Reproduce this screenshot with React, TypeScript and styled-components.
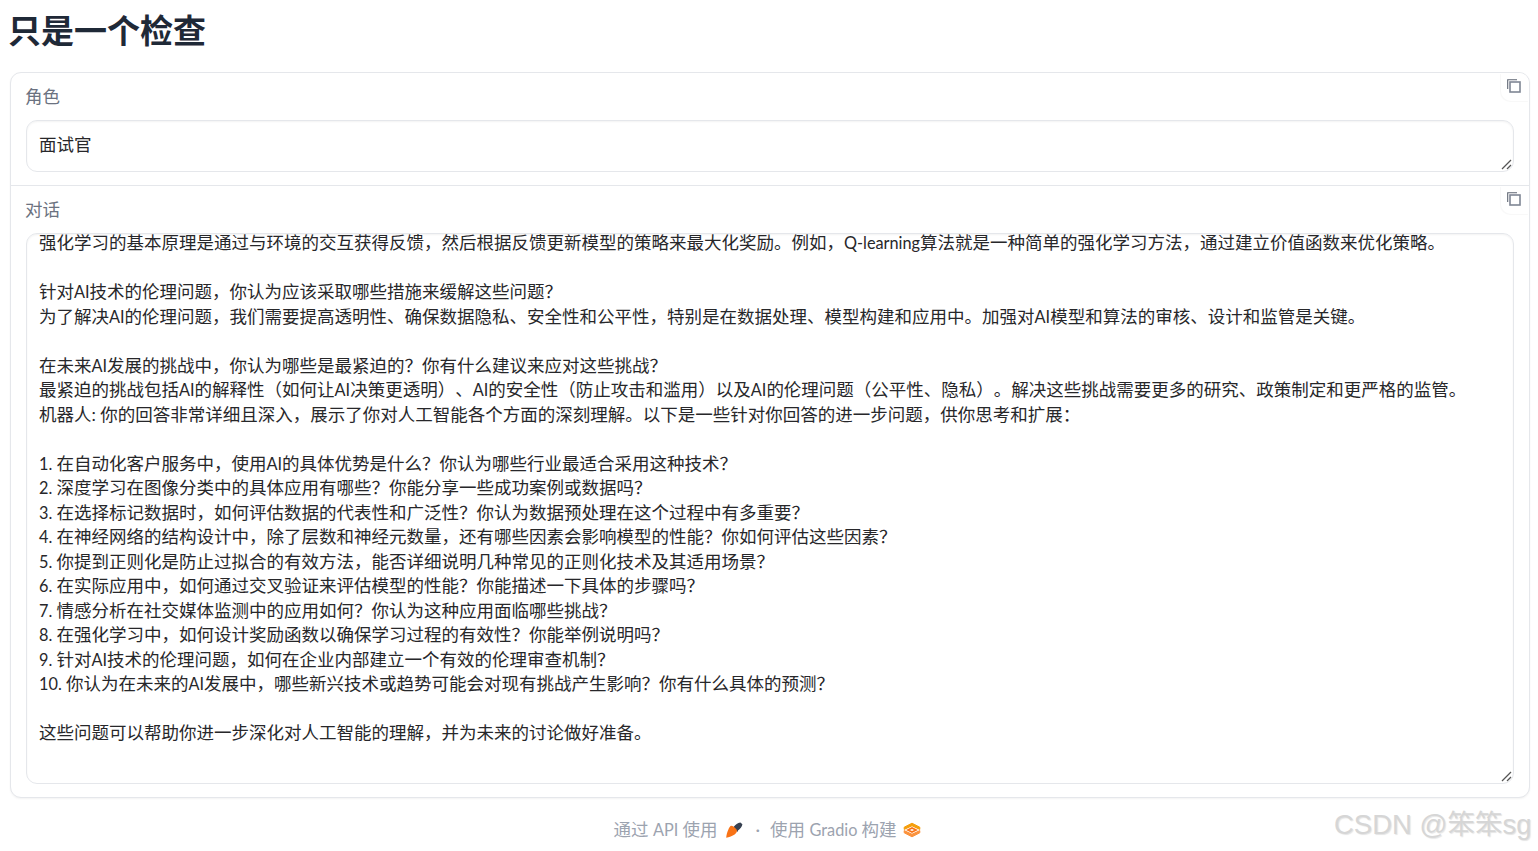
import { Fragment } from 'react';
import styled, { createGlobalStyle } from 'styled-components';

const GlobalStyle = createGlobalStyle`
  html, body {
    margin: 0;
    padding: 0;
    background: #ffffff;
    overflow: hidden;
  }
  body {
    font-family: Lato, "Noto Sans CJK SC", sans-serif;
    color: #27272a;
    text-spacing-trim: space-all;
  }
`;

const Page = styled.div`
  position: relative;
  height: 851px;
  box-sizing: border-box;
  padding: 0 8px 0 10px;
  overflow: hidden;
`;

const Title = styled.h1`
  margin: 0 0 0 -2px;
  height: 72px;
  box-sizing: border-box;
  padding-top: 8px;
  font-size: 33px;
  line-height: 44px;
  font-weight: 700;
  color: #1f2937;
`;

const Panel = styled.div`
  border: 1px solid #e5e7eb;
  border-radius: 11px;
  background: #ffffff;
  box-shadow: 0 1px 2px rgb(0 0 0 / 5%);
  overflow: hidden;
`;

const Field = styled.div<{ $first?: boolean }>`
  position: relative;
  box-sizing: border-box;
  padding: 12px 15px 13px;
  border-top: ${(props) => (props.$first ? 'none' : '1px solid #e5e7eb')};
`;

const Label = styled.div`
  font-size: 17.5px;
  line-height: 24px;
  height: 24px;
  margin-left: -1px;
  color: #6b7280;
  margin-bottom: 11px;
`;

const TextBox = styled.div<{ $height: number }>`
  position: relative;
  height: ${(props) => props.$height}px;
  box-sizing: border-box;
  border: 1px solid #e5e7eb;
  border-radius: 11px;
  box-shadow: inset 0 1px 2px rgb(0 0 0 / 5%);
  padding: 0 12px;
  font-size: 17.5px;
  line-height: 24.5px;
  color: #27272a;
  overflow: hidden;
`;

const ShortText = styled.div`
  padding-top: 12px;
`;

const ScrolledText = styled.div`
  margin-top: -3px;
`;

const Line = styled.div`
  min-height: 24.5px;
  white-space: pre;
`;

const Latin = styled.span`
  font-size: 16.3px;
`;

const ResizeHandle = styled.svg`
  position: absolute;
  right: 1px;
  bottom: 1px;
`;

const CopyButton = styled.button`
  position: absolute;
  top: 0;
  right: 0;
  width: 28px;
  height: 28px;
  box-sizing: border-box;
  padding: 0 2px 2px 0;
  border: none;
  border-radius: 0 0 0 10px;
  background: #ffffff;
  box-shadow: -1px 1px 1px rgb(0 0 0 / 3%);
  display: flex;
  align-items: center;
  justify-content: center;
  color: #6b7280;
`;

const Footer = styled.footer`
  display: flex;
  align-items: center;
  justify-content: center;
  gap: 12px;
  margin-top: 20px;
  padding-right: 6px;
  font-size: 17.5px;
  line-height: 24px;
  color: #9ca3af;
`;

const FooterLink = styled.span<{ $gap: number }>`
  display: flex;
  align-items: center;
  gap: ${(props) => props.$gap}px;
`;

const Separator = styled.span`
  margin-right: -2px;
`;

const Watermark = styled.div`
  position: absolute;
  left: 1334px;
  top: 805px;
  font-family: "Liberation Sans", "Noto Sans CJK SC", sans-serif;
  font-size: 27.5px;
  line-height: 40px;
  white-space: nowrap;
  color: #d6d6d6;
  text-shadow: 1px 1px 1px #e5e5e5;
`;

function CopyIcon() {
  return (
    <svg width="14" height="14" viewBox="0 0 14 14" fill="none">
      <rect x="3" y="3" width="10" height="10" stroke="#7f8694" strokeWidth="1.6" />
      <path d="M0.7 10V0.7H10" stroke="#5f6673" strokeWidth="1.1" />
    </svg>
  );
}

function HandleIcon() {
  return (
    <ResizeHandle width="11" height="11" viewBox="0 0 11 11" fill="none" stroke="#555555" strokeWidth="1.2">
      <path d="M1 10 L10 1" />
      <path d="M6 10 L10 6" />
    </ResizeHandle>
  );
}

function RocketIcon() {
  return (
    <svg width="17" height="16" viewBox="0 0 17 16">
      <path d="M8 4.6 C9.4 2.8 11.6 0.8 14.4 0.4 L16.4 2.2 C16.2 4.8 14 7 12 8.4 L11.4 10 L7 5.8 Z" fill="#374151" />
      <path d="M5 3.8 C7 3.8 8.6 5.2 10.6 7.6 C11.6 9.2 10.6 11.2 8.6 12.6 C6.6 14 3 15.4 0.2 15.8 C0.4 12.8 1.4 9.4 2.4 7.4 C3 6 4 4.2 5 3.8 Z" fill="#f97316" />
    </svg>
  );
}

function GradioIcon() {
  return (
    <svg width="18" height="16" viewBox="0 0 18 16" fill="none">
      <path d="M9 1.2 L16.8 5.2 V7.4 L9 3.8 L1.2 7.4 V5.2 Z" fill="#f59e0b" stroke="#f59e0b" strokeWidth="1" />
      <path d="M9 14.8 L16.8 10.8 V8.6 L9 12.2 L1.2 8.6 V10.8 Z" fill="#fb923c" stroke="#fb923c" strokeWidth="1" />
      <path d="M5 8 L9 5.9 L13 8 L9 10.1 Z" stroke="#f97316" strokeWidth="1.8" />
    </svg>
  );
}

// Latin runs sit a little smaller than the CJK text around them
function Mixed({ text }: { text: string }) {
  return (
    <>
      {text.split(/([A-Za-z0-9][A-Za-z0-9.\-]*:? ?)/).map((part, i) => (
        i % 2 === 1
          ? <Latin key={i}>{part}</Latin>
          : <Fragment key={i}>{part}</Fragment>
      ))}
    </>
  );
}

const conversation = [
  '强化学习的基本原理是通过与环境的交互获得反馈，然后根据反馈更新模型的策略来最大化奖励。例如，Q-learning算法就是一种简单的强化学习方法，通过建立价值函数来优化策略。',
  '',
  '针对AI技术的伦理问题，你认为应该采取哪些措施来缓解这些问题？',
  '为了解决AI的伦理问题，我们需要提高透明性、确保数据隐私、安全性和公平性，特别是在数据处理、模型构建和应用中。加强对AI模型和算法的审核、设计和监管是关键。',
  '',
  '在未来AI发展的挑战中，你认为哪些是最紧迫的？你有什么建议来应对这些挑战？',
  '最紧迫的挑战包括AI的解释性（如何让AI决策更透明）、AI的安全性（防止攻击和滥用）以及AI的伦理问题（公平性、隐私）。解决这些挑战需要更多的研究、政策制定和更严格的监管。',
  '机器人: 你的回答非常详细且深入，展示了你对人工智能各个方面的深刻理解。以下是一些针对你回答的进一步问题，供你思考和扩展：',
  '',
  '1. 在自动化客户服务中，使用AI的具体优势是什么？你认为哪些行业最适合采用这种技术？',
  '2. 深度学习在图像分类中的具体应用有哪些？你能分享一些成功案例或数据吗？',
  '3. 在选择标记数据时，如何评估数据的代表性和广泛性？你认为数据预处理在这个过程中有多重要？',
  '4. 在神经网络的结构设计中，除了层数和神经元数量，还有哪些因素会影响模型的性能？你如何评估这些因素？',
  '5. 你提到正则化是防止过拟合的有效方法，能否详细说明几种常见的正则化技术及其适用场景？',
  '6. 在实际应用中，如何通过交叉验证来评估模型的性能？你能描述一下具体的步骤吗？',
  '7. 情感分析在社交媒体监测中的应用如何？你认为这种应用面临哪些挑战？',
  '8. 在强化学习中，如何设计奖励函数以确保学习过程的有效性？你能举例说明吗？',
  '9. 针对AI技术的伦理问题，如何在企业内部建立一个有效的伦理审查机制？',
  '10. 你认为在未来的AI发展中，哪些新兴技术或趋势可能会对现有挑战产生影响？你有什么具体的预测？',
  '',
  '这些问题可以帮助你进一步深化对人工智能的理解，并为未来的讨论做好准备。',
];

export default function App() {
  return (
    <Page>
      <GlobalStyle />
      <Title>只是一个检查</Title>
      <Panel>
        <Field $first>
          <CopyButton><CopyIcon /></CopyButton>
          <Label>角色</Label>
          <TextBox $height={52}>
            <ShortText>面试官</ShortText>
            <HandleIcon />
          </TextBox>
        </Field>
        <Field>
          <CopyButton><CopyIcon /></CopyButton>
          <Label>对话</Label>
          <TextBox $height={551}>
            <ScrolledText>
              {conversation.map((line, i) => (
                <Line key={i}><Mixed text={line} /></Line>
              ))}
            </ScrolledText>
            <HandleIcon />
          </TextBox>
        </Field>
      </Panel>
      <Footer>
        <FooterLink $gap={9}><span><Mixed text="通过 API 使用" /></span><RocketIcon /></FooterLink>
        <Separator>·</Separator>
        <FooterLink $gap={6}><span><Mixed text="使用 Gradio 构建" /></span><GradioIcon /></FooterLink>
      </Footer>
      <Watermark>CSDN @笨笨sg</Watermark>
    </Page>
  );
}
